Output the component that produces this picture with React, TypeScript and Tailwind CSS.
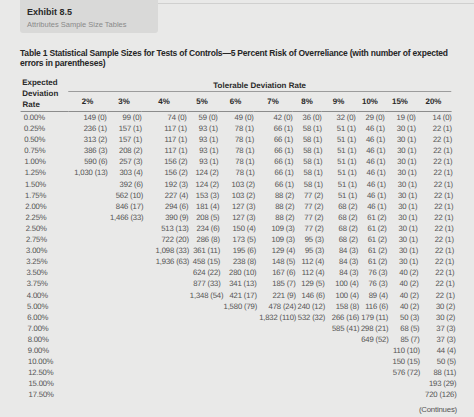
import React from "react";

const cols = ["2%", "3%", "4%", "5%", "6%", "7%", "8%", "9%", "10%", "15%", "20%"];

// each row: rate, then 11 cells ("" = blank)
const rows: [string, string[]][] = [
	["0.00%", ["149 (0)", "99 (0)", "74 (0)", "59 (0)", "49 (0)", "42 (0)", "36 (0)", "32 (0)", "29 (0)", "19 (0)", "14 (0)"]],
	["0.25%", ["236 (1)", "157 (1)", "117 (1)", "93 (1)", "78 (1)", "66 (1)", "58 (1)", "51 (1)", "46 (1)", "30 (1)", "22 (1)"]],
	["0.50%", ["313 (2)", "157 (1)", "117 (1)", "93 (1)", "78 (1)", "66 (1)", "58 (1)", "51 (1)", "46 (1)", "30 (1)", "22 (1)"]],
	["0.75%", ["386 (3)", "208 (2)", "117 (1)", "93 (1)", "78 (1)", "66 (1)", "58 (1)", "51 (1)", "46 (1)", "30 (1)", "22 (1)"]],
	["1.00%", ["590 (6)", "257 (3)", "156 (2)", "93 (1)", "78 (1)", "66 (1)", "58 (1)", "51 (1)", "46 (1)", "30 (1)", "22 (1)"]],
	["1.25%", ["1,030 (13)", "303 (4)", "156 (2)", "124 (2)", "78 (1)", "66 (1)", "58 (1)", "51 (1)", "46 (1)", "30 (1)", "22 (1)"]],
	["1.50%", ["", "392 (6)", "192 (3)", "124 (2)", "103 (2)", "66 (1)", "58 (1)", "51 (1)", "46 (1)", "30 (1)", "22 (1)"]],
	["1.75%", ["", "562 (10)", "227 (4)", "153 (3)", "103 (2)", "88 (2)", "77 (2)", "51 (1)", "46 (1)", "30 (1)", "22 (1)"]],
	["2.00%", ["", "846 (17)", "294 (6)", "181 (4)", "127 (3)", "88 (2)", "77 (2)", "68 (2)", "46 (1)", "30 (1)", "22 (1)"]],
	["2.25%", ["", "1,466 (33)", "390 (9)", "208 (5)", "127 (3)", "88 (2)", "77 (2)", "68 (2)", "61 (2)", "30 (1)", "22 (1)"]],
	["2.50%", ["", "", "513 (13)", "234 (6)", "150 (4)", "109 (3)", "77 (2)", "68 (2)", "61 (2)", "30 (1)", "22 (1)"]],
	["2.75%", ["", "", "722 (20)", "286 (8)", "173 (5)", "109 (3)", "95 (3)", "68 (2)", "61 (2)", "30 (1)", "22 (1)"]],
	["3.00%", ["", "", "1,098 (33)", "361 (11)", "195 (6)", "129 (4)", "95 (3)", "84 (3)", "61 (2)", "30 (1)", "22 (1)"]],
	["3.25%", ["", "", "1,936 (63)", "458 (15)", "238 (8)", "148 (5)", "112 (4)", "84 (3)", "61 (2)", "30 (1)", "22 (1)"]],
	["3.50%", ["", "", "", "624 (22)", "280 (10)", "167 (6)", "112 (4)", "84 (3)", "76 (3)", "40 (2)", "22 (1)"]],
	["3.75%", ["", "", "", "877 (33)", "341 (13)", "185 (7)", "129 (5)", "100 (4)", "76 (3)", "40 (2)", "22 (1)"]],
	["4.00%", ["", "", "", "1,348 (54)", "421 (17)", "221 (9)", "146 (6)", "100 (4)", "89 (4)", "40 (2)", "22 (1)"]],
	["5.00%", ["", "", "", "", "1,580 (79)", "478 (24)", "240 (12)", "158 (8)", "116 (6)", "40 (2)", "30 (2)"]],
	["6.00%", ["", "", "", "", "", "1,832 (110)", "532 (32)", "266 (16)", "179 (11)", "50 (3)", "30 (2)"]],
	["7.00%", ["", "", "", "", "", "", "", "585 (41)", "298 (21)", "68 (5)", "37 (3)"]],
	["8.00%", ["", "", "", "", "", "", "", "", "649 (52)", "85 (7)", "37 (3)"]],
	["9.00%", ["", "", "", "", "", "", "", "", "", "110 (10)", "44 (4)"]],
	["10.00%", ["", "", "", "", "", "", "", "", "", "150 (15)", "50 (5)"]],
	["12.50%", ["", "", "", "", "", "", "", "", "", "576 (72)", "88 (11)"]],
	["15.00%", ["", "", "", "", "", "", "", "", "", "", "193 (29)"]],
	["17.50%", ["", "", "", "", "", "", "", "", "", "", "720 (126)"]],
];

export default function App() {
	return (
		<div
			className="relative h-[417px] w-[474px] overflow-hidden bg-[#e9e9e8] text-[#555]"
			style={{ fontFamily: '"Liberation Sans", Arial, sans-serif' }}
		>
			{/* Exhibit tab */}
			<div className="flex items-start">
				<div className="ml-[20px] h-[33px] w-[138px] rounded-b-[3px] bg-[#d9d9d8] px-[7px] pt-[6px]">
					<div className="text-[9px] font-bold leading-[12px] text-[#2a2a2a]">Exhibit 8.5</div>
					<div className="text-[7.5px] leading-[13px] text-[#8a8a8a]">Attributes Sample Size Tables</div>
				</div>
				<div className="mt-[3px] h-px flex-1 bg-[#d0d0cf]" />
			</div>

			{/* Title */}
			<div className="mt-[15px] px-[20px] text-[8.5px] font-bold leading-[10px] tracking-[-0.2px] text-[#262626]">
				Table 1 Statistical Sample Sizes for Tests of Controls—5 Percent Risk of Overreliance (with number of expected errors in parentheses)
			</div>

			{/* Table (slight skew, like the photographed page) */}
			<div className="ml-[20px] mt-[9px] grid w-[431px] origin-top skew-x-1 grid-cols-[48px_38px_35px_45px_31px_36px_39px_29px_34px_29px_31px_36px] text-[7.8px] tracking-[-0.2px]">
				<div className="row-span-2 border-b-[1.5px] border-[#8c8c8c] pl-[2px] text-[8px] font-bold leading-[11px] tracking-normal text-[#2a2a2a]">
					Expected
					<br />
					Deviation
					<br />
					Rate
				</div>
				<div className="col-span-11 border-b border-[#9c9c9c] pt-[3px] text-center text-[8px] font-bold leading-[11px] tracking-normal text-[#2a2a2a]">
					Tolerable Deviation Rate
				</div>
				{cols.map((c) => (
					<div
						key={c}
						className="border-b-[1.5px] border-[#8c8c8c] pb-[4px] pt-[4px] text-center text-[8px] font-bold leading-[11px] tracking-normal text-[#2a2a2a]"
					>
						{c}
					</div>
				))}

				{rows.map(([rate, cells]) => (
					<React.Fragment key={rate}>
						<div className="pl-[3px] leading-[11.1px]">{rate}</div>
						{cells.map((v, i) => (
							<div key={i} className="whitespace-nowrap text-right leading-[11.1px]">
								{v}
							</div>
						))}
					</React.Fragment>
				))}
			</div>

			<div className="mr-[17px] mt-[4px] text-right text-[7.8px] leading-[11px] tracking-[-0.2px] text-[#555]">(Continues)</div>
		</div>
	);
}
